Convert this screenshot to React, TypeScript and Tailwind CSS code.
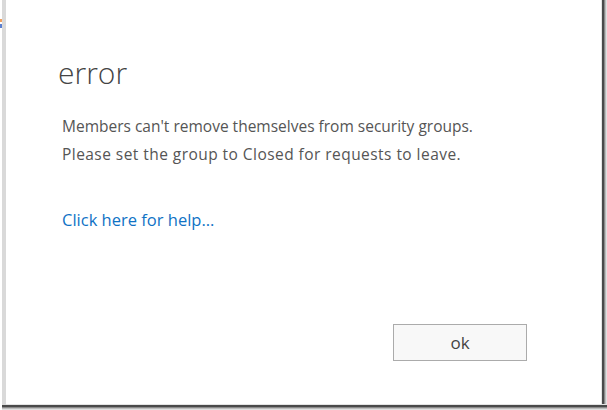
import React from "react";

const font = { fontFamily: '"Open Sans", "Segoe UI", sans-serif' };

function Dialog() {
  return (
    <div className="flex flex-1 flex-col bg-white pl-[56px] pr-[74px] pt-[55px]" style={font}>
      <h1 className="-ml-[4px] text-[30px] font-light leading-[36px] text-[#444]">error</h1>
      <p className="mt-[21px] text-[15.5px] leading-[28px] text-[#555]">
        Members can't remove themselves from security groups.
        <br />
        <span className="tracking-[0.45px]">Please set the group to Closed for requests to leave.</span>
      </p>
      <a href="#" className="mt-[38px] text-[16.5px] leading-[28px] text-[#0f72c5]">
        Click here for help...
      </a>
      <div className="mt-auto mb-[43px] flex justify-end">
        <button className="h-[37px] w-[134px] border border-[#ababab] bg-[#f8f8f8] text-[17px] text-[#444]">
          ok
        </button>
      </div>
    </div>
  );
}

export default function App() {
  return (
    <div className="flex h-[410px] w-[607px] flex-col bg-white">
      <div className="flex flex-1">
        <div className="relative w-[2px] bg-white">
          <div className="absolute left-0 top-[19px] h-[3px] w-[2px] bg-[#f0a060]" />
          <div className="absolute left-0 top-[24px] h-[4px] w-[2px] bg-[#5a7fd0]" />
        </div>
        <div className="w-[4px] bg-[#d9d9d9]" />
        <Dialog />
        <div className="w-[1px] bg-[#e4e4e4]" />
        <div className="w-[2px] bg-[#4a4a4a]" />
        <div className="w-[1px] bg-[#8a8a8a]" />
        <div className="w-[1px] bg-[#bcbcbc]" />
        <div className="w-[1px] bg-[#e0e0e0]" />
      </div>
      <div className="flex h-[1px]">
        <div className="w-[2px] bg-white" />
        <div className="w-[4px] bg-[#d9d9d9]" />
        <div className="flex-1 bg-[#e4e4e4]" />
      </div>
      <div className="ml-[2px] h-[2px] bg-[#4a4a4a]" />
      <div className="ml-[2px] h-[1px] bg-[#8a8a8a]" />
      <div className="ml-[2px] h-[1px] bg-[#bcbcbc]" />
      <div className="ml-[2px] h-[1px] bg-[#e0e0e0]" />
    </div>
  );
}
